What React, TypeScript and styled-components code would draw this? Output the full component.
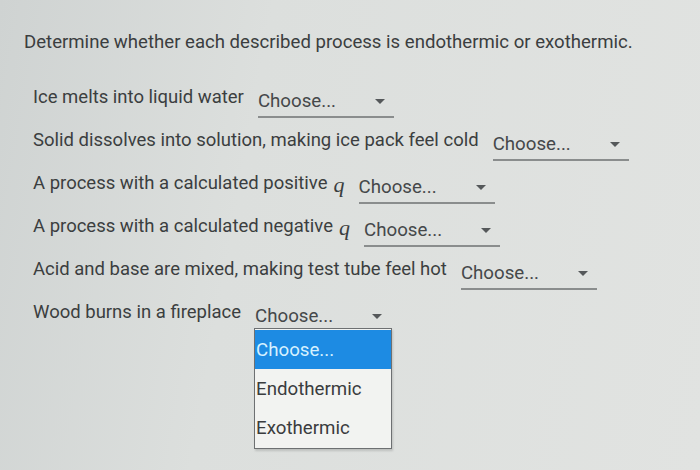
import React from 'react';
import styled, { createGlobalStyle } from 'styled-components';

const GlobalStyle = createGlobalStyle`
  html, body {
    margin: 0;
    padding: 0;
    width: 700px;
    height: 470px;
    overflow: hidden;
  }
  body {
    background: linear-gradient(100deg, #cfd3d2 0%, #dcdfdd 35%, #e1e3e1 100%);
    font-family: Roboto, "Liberation Sans", sans-serif;
    color: #3b3e40;
  }
`;

const Page = styled.div`
  padding: 30px 0 0 24px;
`;

const Title = styled.div`
  font-size: 18.6px;
  line-height: 24px;
  margin-bottom: 31px;
`;

const List = styled.div`
  display: flex;
  flex-direction: column;
  gap: 10px;
  padding-left: 9px;
`;

const Row = styled.div`
  display: flex;
  align-items: flex-start;
  gap: 14px;
`;

const Label = styled.span`
  font-size: 18.5px;
  line-height: 24px;
  height: 24px;
  white-space: nowrap;
`;

const Q = styled.i`
  font-family: "Liberation Serif", serif;
  font-size: 22px;
  line-height: 0;
  margin-left: 6px;
  position: relative;
  top: 3px;
`;

const SelectWrap = styled.div`
  position: relative;
`;

const Select = styled.div<{ $open?: boolean }>`
  width: 136px;
  box-sizing: border-box;
  display: flex;
  align-items: center;
  justify-content: space-between;
  padding: 4px 9px 3px 0;
  font-size: 18.7px;
  line-height: 24px;
  color: #45484a;
  border-bottom: 2px solid ${(p) => (p.$open ? 'transparent' : '#8a8d8d')};
`;

const Arrow = styled.span`
  width: 0;
  height: 0;
  border-left: 5px solid transparent;
  border-right: 5px solid transparent;
  border-top: 5px solid #55585a;
`;

const Menu = styled.div`
  position: absolute;
  top: 28px;
  left: -1px;
  width: 138px;
  box-sizing: border-box;
  background: #f2f3f1;
  border: 1px solid #6d7072;
  box-shadow: 1px 2px 2px rgba(0, 0, 0, 0.15);
  padding: 1px 0;
  z-index: 10;
`;

const Option = styled.div<{ $active?: boolean }>`
  height: 39px;
  display: flex;
  align-items: center;
  padding-left: 1px;
  font-size: 18.7px;
  color: ${(p) => (p.$active ? '#d6f1ff' : '#3a3c3e')};
  background: ${(p) => (p.$active ? '#1d8be3' : 'transparent')};
`;

type Item = { text: string; q?: boolean; open?: boolean };

const items: Item[] = [
  { text: 'Ice melts into liquid water' },
  { text: 'Solid dissolves into solution, making ice pack feel cold' },
  { text: 'A process with a calculated positive', q: true },
  { text: 'A process with a calculated negative', q: true },
  { text: 'Acid and base are mixed, making test tube feel hot' },
  { text: 'Wood burns in a fireplace', open: true },
];

const options = ['Choose...', 'Endothermic', 'Exothermic'];

export default function App() {
  return (
    <>
      <GlobalStyle />
      <Page>
        <Title>Determine whether each described process is endothermic or exothermic.</Title>
        <List>
          {items.map((it) => (
            <Row key={it.text}>
              <Label>
                {it.text}
                {it.q && <Q>q</Q>}
              </Label>
              <SelectWrap>
                <Select $open={it.open}>
                  Choose...
                  <Arrow />
                </Select>
                {it.open && (
                  <Menu>
                    {options.map((o, i) => (
                      <Option key={o} $active={i === 0}>
                        {o}
                      </Option>
                    ))}
                  </Menu>
                )}
              </SelectWrap>
            </Row>
          ))}
        </List>
      </Page>
    </>
  );
}
